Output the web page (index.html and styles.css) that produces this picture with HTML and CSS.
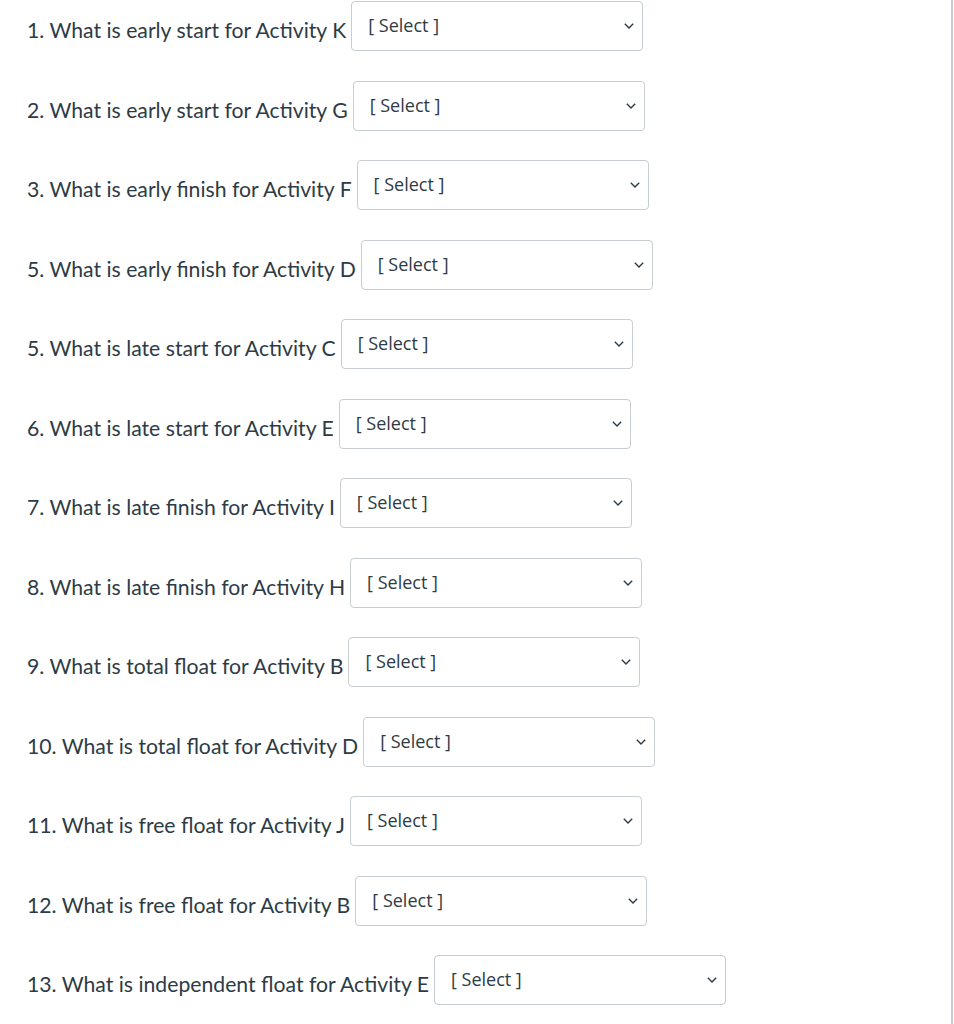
FILE: index.html
```html
<!DOCTYPE html>
<html>
<head>
<meta charset="utf-8">
<link rel="stylesheet" href="styles.css">
</head>
<body>
<div class="page">
  <div class="questions">
    <div class="row"><span class="q">1. What is early start for Activity K</span><div class="sel"><span class="val">[ Select ]</span><svg class="chev" viewBox="0 0 10 6"><path d="M0.8 0.8 L5 5 L9.2 0.8"/></svg></div></div>
    <div class="row"><span class="q">2. What is early start for Activity G</span><div class="sel"><span class="val">[ Select ]</span><svg class="chev" viewBox="0 0 10 6"><path d="M0.8 0.8 L5 5 L9.2 0.8"/></svg></div></div>
    <div class="row"><span class="q">3. What is early finish for Activity F</span><div class="sel"><span class="val">[ Select ]</span><svg class="chev" viewBox="0 0 10 6"><path d="M0.8 0.8 L5 5 L9.2 0.8"/></svg></div></div>
    <div class="row"><span class="q">5. What is early finish for Activity D</span><div class="sel"><span class="val">[ Select ]</span><svg class="chev" viewBox="0 0 10 6"><path d="M0.8 0.8 L5 5 L9.2 0.8"/></svg></div></div>
    <div class="row"><span class="q">5. What is late start for Activity C</span><div class="sel"><span class="val">[ Select ]</span><svg class="chev" viewBox="0 0 10 6"><path d="M0.8 0.8 L5 5 L9.2 0.8"/></svg></div></div>
    <div class="row"><span class="q">6. What is late start for Activity E</span><div class="sel"><span class="val">[ Select ]</span><svg class="chev" viewBox="0 0 10 6"><path d="M0.8 0.8 L5 5 L9.2 0.8"/></svg></div></div>
    <div class="row"><span class="q">7. What is late finish for Activity I</span><div class="sel"><span class="val">[ Select ]</span><svg class="chev" viewBox="0 0 10 6"><path d="M0.8 0.8 L5 5 L9.2 0.8"/></svg></div></div>
    <div class="row"><span class="q">8. What is late finish for Activity H</span><div class="sel"><span class="val">[ Select ]</span><svg class="chev" viewBox="0 0 10 6"><path d="M0.8 0.8 L5 5 L9.2 0.8"/></svg></div></div>
    <div class="row"><span class="q">9. What is total float for Activity B</span><div class="sel"><span class="val">[ Select ]</span><svg class="chev" viewBox="0 0 10 6"><path d="M0.8 0.8 L5 5 L9.2 0.8"/></svg></div></div>
    <div class="row"><span class="q">10. What is total float for Activity D</span><div class="sel"><span class="val">[ Select ]</span><svg class="chev" viewBox="0 0 10 6"><path d="M0.8 0.8 L5 5 L9.2 0.8"/></svg></div></div>
    <div class="row"><span class="q">11. What is free float for Activity J</span><div class="sel"><span class="val">[ Select ]</span><svg class="chev" viewBox="0 0 10 6"><path d="M0.8 0.8 L5 5 L9.2 0.8"/></svg></div></div>
    <div class="row"><span class="q">12. What is free float for Activity B</span><div class="sel"><span class="val">[ Select ]</span><svg class="chev" viewBox="0 0 10 6"><path d="M0.8 0.8 L5 5 L9.2 0.8"/></svg></div></div>
    <div class="row"><span class="q">13. What is independent float for Activity E</span><div class="sel"><span class="val">[ Select ]</span><svg class="chev" viewBox="0 0 10 6"><path d="M0.8 0.8 L5 5 L9.2 0.8"/></svg></div></div>
  </div>
</div>
</body>
</html>
```

FILE: styles.css
```css
html, body {
  margin: 0;
  padding: 0;
  background: #ffffff;
}
.page {
  display: flex;
  width: 953px;
  min-height: 1024px;
  border-right: 2px solid #c8ccd0;
  box-sizing: border-box;
}
.questions {
  display: flex;
  flex-direction: column;
  padding: 1px 0 0 27px;
}
.row {
  display: flex;
  align-items: flex-start;
  height: 79.5px;
  gap: 5px;
}
.q {
  font-family: Lato, "Liberation Sans", sans-serif;
  font-size: 21.2px;
  color: #2d3b45;
  margin-top: 16px;
  line-height: 26px;
  white-space: nowrap;
}
.sel {
  display: flex;
  align-items: center;
  justify-content: space-between;
  width: 292px;
  height: 50px;
  box-sizing: border-box;
  border: 1px solid #c7cdd1;
  border-radius: 4px;
  padding: 0 8px 0 16px;
}
.val {
  font-family: "Open Sans", "Noto Sans", sans-serif;
  font-size: 18px;
  color: #2d3b45;
  margin-top: -2px;
}
.chev {
  width: 10px;
  height: 6px;
  fill: none;
  stroke: #2d3b45;
  stroke-width: 1.4;
}
```
